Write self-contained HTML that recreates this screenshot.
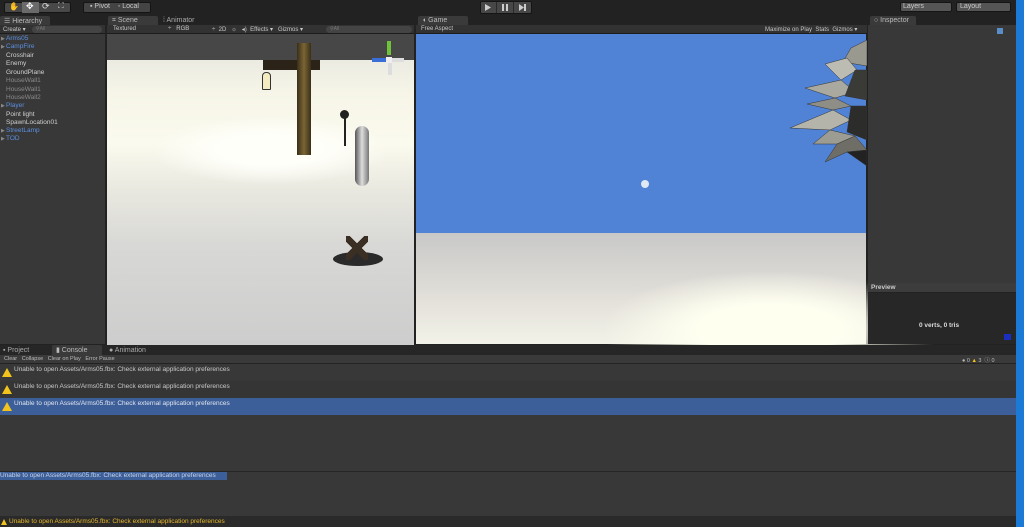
<!DOCTYPE html>
<html><head><style>
*{margin:0;padding:0;box-sizing:border-box}
body{width:1024px;height:527px;background:#222;overflow:hidden;position:relative;font-family:"Liberation Sans",sans-serif;font-size:7px;color:#c8c8c8}
.a{position:absolute;white-space:nowrap}
.tab{position:absolute;height:10px;background:#3a3a3a;border-radius:2px 2px 0 0;padding:1px 4px;font-size:7px;color:#bbb;white-space:nowrap}
.tb{position:absolute;height:9px;background:#323232;border-bottom:1px solid #1c1c1c}
.btn{position:absolute;background:#3d3d3d;border:1px solid #151515;border-radius:2px}
.h{position:absolute;left:6px;font-size:6.5px}
.bl{color:#5b8fe0}.gr{color:#8a8a8a}.wh{color:#d0d0d0}
.tri{position:absolute;left:1px;font-size:5px;color:#888}
.log{position:absolute;left:14px;font-size:6.5px;color:#c8c8c8;white-space:nowrap}
.warn{position:absolute;left:2px;width:0;height:0;border-left:5px solid transparent;border-right:5px solid transparent;border-bottom:9px solid #f2c31c}
</style></head><body>
<!-- top toolbar -->
<div class="btn" style="left:4px;top:2px;width:67px;height:11px;background:#484848"></div>
<div class="a" style="left:22px;top:2px;width:17px;height:11px;background:#6a6a6a"></div>
<div class="a" style="left:9px;top:2px;color:#ddd;font-size:8px">✋</div>
<div class="a" style="left:26px;top:1px;color:#fff;font-size:9px">✥</div>
<div class="a" style="left:42px;top:1px;color:#ddd;font-size:9px">⟳</div>
<div class="a" style="left:58px;top:1px;color:#ddd;font-size:8px">⛶</div>
<div class="btn" style="left:83px;top:2px;width:68px;height:11px;background:#444"></div>
<div class="a" style="left:90px;top:3px;color:#c8c8c8">▪ Pivot &nbsp;&nbsp; ◦ Local</div>
<div class="btn" style="left:480px;top:1px;width:52px;height:13px;background:#474747"></div>
<svg class="a" style="left:480px;top:1px" width="52" height="13" viewBox="0 0 52 13">
<polygon points="5,3 5,10 11,6.5" fill="#ccc"/>
<rect x="22" y="3" width="2" height="7" fill="#ccc"/><rect x="26" y="3" width="2" height="7" fill="#ccc"/>
<polygon points="39,3 39,10 44,6.5" fill="#ccc"/><rect x="44" y="3" width="2" height="7" fill="#ccc"/>
<rect x="16" y="1" width="1" height="11" fill="#2a2a2a"/><rect x="33" y="1" width="1" height="11" fill="#2a2a2a"/>
</svg>
<div class="btn" style="left:900px;top:2px;width:52px;height:10px;background:#555"></div>
<div class="a" style="left:903px;top:3px;color:#ccc">Layers</div>
<div class="btn" style="left:956px;top:2px;width:55px;height:10px;background:#555"></div>
<div class="a" style="left:960px;top:3px;color:#ccc">Layout</div>
<div class="a" style="left:1016px;top:0;width:8px;height:527px;background:#1a7ad6"></div>

<!-- Hierarchy -->
<div class="tab" style="left:0;top:16px;width:50px">☰ Hierarchy</div>
<div class="tb" style="left:0;top:25px;width:105px"></div>
<div class="a" style="left:3px;top:26px;font-size:6px">Create ▾</div>
<div class="a" style="left:32px;top:26px;width:70px;height:7px;background:#444;border-radius:4px;font-size:5px;color:#777;padding-left:4px">⚲All</div>
<div class="a" style="left:0;top:34px;width:105px;height:310px;background:#383838"></div>
<div class="tri" style="top:36px">▶</div><div class="h bl" style="top:35px">Arms05</div>
<div class="tri" style="top:44px">▶</div><div class="h bl" style="top:43px">CampFire</div>
<div class="h wh" style="top:52px">Crosshair</div>
<div class="h wh" style="top:60px">Enemy</div>
<div class="h wh" style="top:69px">GroundPlane</div>
<div class="h gr" style="top:77px">HouseWall1</div>
<div class="h gr" style="top:86px">HouseWall1</div>
<div class="h gr" style="top:94px">HouseWall2</div>
<div class="tri" style="top:103px">▶</div><div class="h bl" style="top:102px">Player</div>
<div class="h wh" style="top:111px">Point light</div>
<div class="h wh" style="top:119px">SpawnLocation01</div>
<div class="tri" style="top:128px">▶</div><div class="h bl" style="top:127px">StreetLamp</div>
<div class="tri" style="top:136px">▶</div><div class="h bl" style="top:135px">TOD</div>

<!-- Scene -->
<div class="tab" style="left:108px;top:16px;width:50px">⌗ Scene</div>
<div class="a" style="left:163px;top:17px;color:#aaa">⁞ Animator</div>
<div class="tb" style="left:107px;top:25px;width:307px"></div>
<div class="a" style="left:113px;top:26px;font-size:6px">Textured</div>
<div class="a" style="left:168px;top:26px;font-size:6px">÷ &nbsp;&nbsp;RGB</div>
<div class="a" style="left:212px;top:26px;font-size:6px">÷ &nbsp;2D &nbsp;&nbsp;☼ &nbsp;&nbsp;◂) &nbsp;Effects ▾ &nbsp;&nbsp;Gizmos ▾</div>
<div class="a" style="left:326px;top:26px;width:86px;height:7px;background:#444;border-radius:4px;font-size:5px;color:#777;padding-left:4px">⚲All</div>
<div class="a" style="left:107px;top:34px;width:307px;height:311px;background:linear-gradient(#474747 0,#474747 26px,#ecebe2 26px,#f6f5e8 60px,#fbfaee 110px,#e8e7df 160px,#d8d8d6 210px,#cdcdcd 311px)"></div>
<div class="a" style="left:150px;top:115px;width:240px;height:70px;border-radius:50%;background:radial-gradient(#fffffa 30%,rgba(255,255,250,0) 70%)"></div>
<div class="a" style="left:263px;top:60px;width:57px;height:10px;background:#2b2318"></div>
<div class="a" style="left:297px;top:43px;width:14px;height:112px;background:linear-gradient(90deg,#3a2e18,#7a6535,#3a2e18)"></div>
<div class="a" style="left:262px;top:72px;width:9px;height:18px;background:#f2ecc0;border:1px solid #333;border-radius:4px 4px 1px 1px"></div>
<div class="a" style="left:340px;top:110px;width:9px;height:9px;background:#222;border-radius:50%"></div>
<div class="a" style="left:344px;top:118px;width:2px;height:28px;background:#222"></div>
<div class="a" style="left:355px;top:126px;width:14px;height:60px;border-radius:7px;background:linear-gradient(90deg,#555,#ddd 50%,#777)"></div>
<div class="a" style="left:333px;top:252px;width:50px;height:14px;border-radius:50%;background:#2a2a2a"></div>
<div class="a" style="left:346px;top:236px;width:22px;height:24px;background:linear-gradient(135deg,transparent 40%,#3a2f22 40%,#3a2f22 60%,transparent 60%),linear-gradient(45deg,transparent 40%,#3a2f22 40%,#3a2f22 60%,transparent 60%)"></div>
<div class="a" style="left:387px;top:41px;width:4px;height:14px;background:#6fc33b"></div>
<div class="a" style="left:372px;top:58px;width:14px;height:4px;background:#3b6fd8"></div>
<div class="a" style="left:386px;top:57px;width:6px;height:6px;background:#eee"></div>
<div class="a" style="left:392px;top:58px;width:12px;height:4px;background:#ddd"></div>
<div class="a" style="left:388px;top:63px;width:4px;height:12px;background:#ddd"></div>

<!-- Game -->
<div class="tab" style="left:418px;top:16px;width:50px">◖ Game</div>
<div class="tb" style="left:416px;top:25px;width:451px"></div>
<div class="a" style="left:421px;top:26px;font-size:6px">Free Aspect</div>
<div class="a" style="left:765px;top:26px;font-size:6px">Maximize on Play &nbsp;Stats &nbsp;Gizmos ▾</div>
<div class="a" style="left:416px;top:34px;width:450px;height:200px;background:#5083d6"></div>
<div class="a" style="left:641px;top:180px;width:8px;height:8px;border-radius:50%;background:#dfe8f7"></div>
<div class="a" style="left:416px;top:233px;width:450px;height:111px;background:linear-gradient(#c8c8c8,#dedcd6 50%,#f3f2e8)"></div>
<div class="a" style="left:600px;top:270px;width:340px;height:120px;border-radius:50%;background:radial-gradient(#fffff0 30%,rgba(255,255,230,0) 70%)"></div>
<svg class="a" style="left:785px;top:40px" width="82" height="126" viewBox="0 0 82 126">
<g stroke="#333" stroke-width="0.5">
<polygon points="82,0 66,8 58,22 82,26" fill="#9a9990"/>
<polygon points="62,18 40,24 56,40 72,30" fill="#bdbcb2"/>
<polygon points="56,40 20,48 50,58 70,52" fill="#aaa9a0"/>
<polygon points="70,30 82,30 82,60 60,56" fill="#3a3a36"/>
<polygon points="50,58 22,64 48,70 66,66" fill="#8f8e86"/>
<polygon points="48,70 5,88 45,90 66,80" fill="#b5b4aa"/>
<polygon points="66,66 82,66 82,100 62,92" fill="#2c2c2a"/>
<polygon points="45,90 28,104 52,104 70,96" fill="#9d9c93"/>
<polygon points="52,104 40,122 62,112 82,110 70,96" fill="#6e6d66"/>
<polygon points="62,112 82,126 82,110" fill="#222"/>
</g>
</svg>

<!-- Inspector -->
<div class="tab" style="left:870px;top:16px;width:46px">○ Inspector</div>
<div class="a" style="left:868px;top:25px;width:148px;height:258px;background:#383838"></div>
<div class="a" style="left:997px;top:28px;width:6px;height:6px;background:#5a8cc8"></div>
<div class="a" style="left:868px;top:283px;width:148px;height:10px;background:#3c3c3c;border-bottom:1px solid #222;font-weight:bold;font-size:6.5px;padding:1px 3px;color:#ccc">Preview</div>
<div class="a" style="left:868px;top:293px;width:148px;height:51px;background:#272727"></div>
<div class="a" style="left:919px;top:322px;font-size:6.5px;font-weight:bold;color:#ddd">0 verts, 0 tris</div>
<div class="a" style="left:1004px;top:334px;width:7px;height:6px;background:#1a2ec0"></div>

<!-- Bottom -->
<div class="a" style="left:0;top:345px;width:1016px;height:10px;background:#262626"></div>
<div class="a" style="left:3px;top:347px;color:#aaa">▪ Project</div>
<div class="tab" style="left:52px;top:345px;width:50px;background:#3a3a3a">▮ Console</div>
<div class="a" style="left:109px;top:347px;color:#aaa">● Animation</div>
<div class="a" style="left:0;top:355px;width:1016px;height:9px;background:#3a3a3a;border-bottom:1px solid #222"></div>
<div class="a" style="left:4px;top:356px;font-size:5.5px;color:#bbb">Clear &nbsp;&nbsp;Collapse &nbsp;&nbsp;Clear on Play &nbsp;&nbsp;Error Pause</div>
<div class="a" style="left:962px;top:356px;font-size:5.5px;color:#bbb">● 0 <span style="color:#f2c31c">▲</span> 3 &nbsp;ⓘ 0</div>
<div class="a" style="left:0;top:364px;width:1016px;height:153px;background:#383838"></div>
<div class="a" style="left:0;top:381px;width:1016px;height:17px;background:#353535"></div>
<div class="a" style="left:0;top:398px;width:1016px;height:17px;background:#3c5e99"></div>
<div class="warn" style="top:368px"></div><div class="log" style="top:366px">Unable to open Assets/Arms05.fbx: Check external application preferences</div>
<div class="warn" style="top:385px"></div><div class="log" style="top:383px">Unable to open Assets/Arms05.fbx: Check external application preferences</div>
<div class="warn" style="top:402px"></div><div class="log" style="top:400px;color:#e4e8f0">Unable to open Assets/Arms05.fbx: Check external application preferences</div>
<div class="a" style="left:0;top:471px;width:1016px;height:1px;background:#252525"></div>
<div class="a" style="left:0;top:472px;height:8px;width:227px;background:#3c5e99;font-size:6.5px;color:#c8d4e8;overflow:hidden">Unable to open Assets/Arms05.fbx: Check external application preferences</div>
<div class="a" style="left:0;top:516px;width:1016px;height:11px;background:#2a2a2a"></div>
<div class="a" style="left:1px;top:519px;width:0;height:0;border-left:3px solid transparent;border-right:3px solid transparent;border-bottom:6px solid #f2c31c"></div>
<div class="a" style="left:9px;top:518px;font-size:6.5px;color:#e8b82a">Unable to open Assets/Arms05.fbx: Check external application preferences</div>
</body></html>
